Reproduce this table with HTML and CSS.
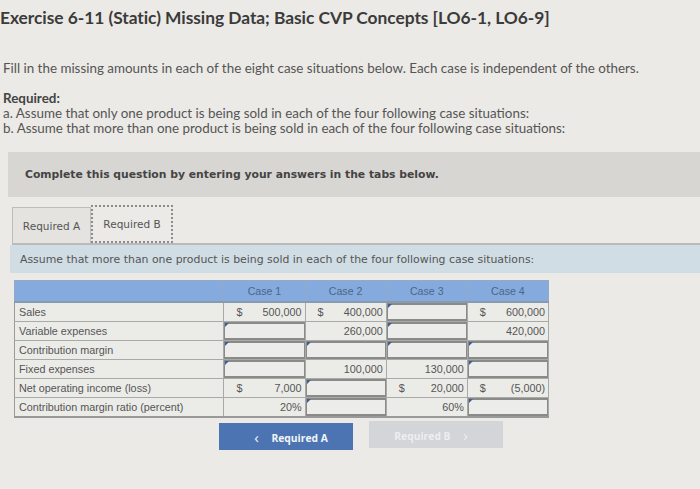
FILE: index.html
```html
<!DOCTYPE html>
<html>
<head>
<meta charset="utf-8">
<link rel="stylesheet" href="styles.css">
</head>
<body>
<h1 class="title">Exercise 6-11 (Static) Missing Data; Basic CVP Concepts [LO6-1, LO6-9]</h1>
<p class="intro">Fill in the missing amounts in each of the eight case situations below. Each case is independent of the others.</p>
<div class="req">
  <div class="req-head">Required:</div>
  <div>a. Assume that only one product is being sold in each of the four following case situations:</div>
  <div>b. Assume that more than one product is being sold in each of the four following case situations:</div>
</div>
<div class="band">Complete this question by entering your answers in the tabs below.</div>
<div class="tabs">
  <div class="tab">Required A</div>
  <div class="tab active">Required B</div>
</div>
<div class="assume">Assume that more than one product is being sold in each of the four following case situations:</div>
<table class="cvp">
  <colgroup>
    <col class="c-label"><col class="c-case"><col class="c-case"><col class="c-case"><col class="c-case">
  </colgroup>
  <thead>
    <tr><th></th><th>Case 1</th><th>Case 2</th><th>Case 3</th><th>Case 4</th></tr>
  </thead>
  <tbody>
    <tr>
      <td class="lbl">Sales</td>
      <td><div class="val"><span>$</span><span>500,000</span></div></td>
      <td><div class="val"><span>$</span><span>400,000</span></div></td>
      <td class="inp"><div class="box"></div></td>
      <td><div class="val"><span>$</span><span>600,000</span></div></td>
    </tr>
    <tr>
      <td class="lbl">Variable expenses</td>
      <td class="inp"><div class="box"></div></td>
      <td><div class="val"><span></span><span>260,000</span></div></td>
      <td class="inp"><div class="box"></div></td>
      <td><div class="val"><span></span><span>420,000</span></div></td>
    </tr>
    <tr>
      <td class="lbl">Contribution margin</td>
      <td class="inp"><div class="box"></div></td>
      <td class="inp"><div class="box"></div></td>
      <td class="inp"><div class="box"></div></td>
      <td class="inp"><div class="box"></div></td>
    </tr>
    <tr>
      <td class="lbl">Fixed expenses</td>
      <td class="inp"><div class="box"></div></td>
      <td><div class="val"><span></span><span>100,000</span></div></td>
      <td><div class="val"><span></span><span>130,000</span></div></td>
      <td class="inp"><div class="box"></div></td>
    </tr>
    <tr>
      <td class="lbl">Net operating income (loss)</td>
      <td><div class="val"><span>$</span><span>7,000</span></div></td>
      <td class="inp"><div class="box"></div></td>
      <td><div class="val"><span>$</span><span>20,000</span></div></td>
      <td><div class="val"><span>$</span><span>(5,000)</span></div></td>
    </tr>
    <tr>
      <td class="lbl">Contribution margin ratio (percent)</td>
      <td><div class="val"><span></span><span>20%</span></div></td>
      <td class="inp"><div class="box"></div></td>
      <td><div class="val"><span></span><span>60%</span></div></td>
      <td class="inp"><div class="box"></div></td>
    </tr>
  </tbody>
</table>
<div class="nav">
  <button class="btn prev"><span class="chev">&lsaquo;</span> Required A</button>
  <button class="btn next">Required B <span class="chev">&rsaquo;</span></button>
</div>
</body>
</html>
```
FILE: styles.css
```css
html, body {
  margin: 0;
  padding: 0;
}
body {
  background: #ebeae6;
  width: 700px;
  height: 489px;
  overflow: hidden;
  font-family: "Lato", "Liberation Sans", sans-serif;
  color: #444;
}
.title {
  margin: 0;
  padding: 8px 0 0 0;
  font-size: 17.4px;
  line-height: 20px;
  font-weight: 700;
  color: #3b3b3b;
  letter-spacing: -0.05px;
}
.intro {
  margin: 32px 0 0 3px;
  font-size: 13.4px;
  line-height: 16px;
  color: #555;
}
.req {
  margin: 15px 0 0 3px;
  font-size: 13.4px;
  line-height: 15px;
  color: #555;
}
.req-head {
  font-weight: 700;
  color: #444;
}
.band {
  margin: 16px 0 0 8px;
  height: 45px;
  background: #d7d6d2;
  font-family: "DejaVu Sans", "Liberation Sans", sans-serif;
  font-weight: 700;
  font-size: 10.8px;
  line-height: 45px;
  padding-left: 17px;
  color: #444;
}
.tabs {
  display: flex;
  margin: 8px 0 0 12px;
  height: 38px;
  border-bottom: 2px solid #b9bab9;
}
.tab {
  width: 79px;
  box-sizing: border-box;
  border: 1px solid #bdbdbb;
  border-bottom: none;
  background: #e4e3df;
  font-family: "DejaVu Sans", "Liberation Sans", sans-serif;
  font-size: 10.5px;
  color: #555;
  display: flex;
  align-items: center;
  justify-content: center;
  margin-top: 2px;
}
.tab.active {
  width: 82px;
  margin-top: 0;
  background: #ebeae6;
  border: 2px dotted #8c8c8c;
}
.assume {
  margin: 0 0 0 10px;
  height: 28px;
  background: #d0dde4;
  font-family: "DejaVu Sans", "Liberation Sans", sans-serif;
  font-size: 10.9px;
  line-height: 29px;
  padding-left: 10px;
  color: #555;
}
.cvp {
  margin: 7px 0 0 14px;
  border-collapse: collapse;
  font-family: "Liberation Sans", Arial, sans-serif;
  font-size: 10.8px;
  color: #555;
  table-layout: fixed;
  width: 535px;
}
.c-label { width: 209px; }
.c-case { width: 81px; }
.cvp thead th {
  background: #85aade;
  color: #4d6687;
  font-weight: 400;
  height: 20px;
  padding: 0;
  border: 1px solid #95a9c4;
  border-bottom: 2px solid #8a9ab1;
  font-size: 10.6px;
}
.cvp td {
  height: 18px;
  padding: 0;
  border: 1px solid #a9a9a7;
  background: #ebebe8;
}
.cvp td.lbl {
  padding-left: 4px;
  border-left: 1px solid #999;
}
.val {
  display: flex;
  justify-content: space-between;
  padding: 0 3px 0 12px;
}
.cvp td.inp {
  padding: 0;
  position: relative;
}
.box {
  height: 14px;
  border: 2px solid #8a8a88;
  border-left-width: 1px;
  border-right-width: 1px;
  background: #ececea;
}
.inp::before {
  content: "";
  position: absolute;
  left: 1px;
  top: 1px;
  border-left: 4px solid #3e5f95;
  border-bottom: 4px solid transparent;
}
.cvp tbody tr:last-child td {
  border-bottom: 2px solid #999;
}
.nav {
  display: flex;
  gap: 16px;
  margin: 5px 0 0 219px;
}
.btn {
  width: 134px;
  height: 27px;
  border: none;
  font-family: "Open Sans", "Liberation Sans", sans-serif;
  font-weight: 700;
  font-size: 10.3px;
  padding: 0;
}
.btn.prev {
  background: #4c74b2;
  color: #f2f4f8;
}
.btn.next {
  background: #d3d5d8;
  color: #eceef1;
  margin-top: -2px;
}
.chev {
  font-size: 15px;
  font-weight: 400;
  margin: 0 10px;
  vertical-align: -1px;
}
```
